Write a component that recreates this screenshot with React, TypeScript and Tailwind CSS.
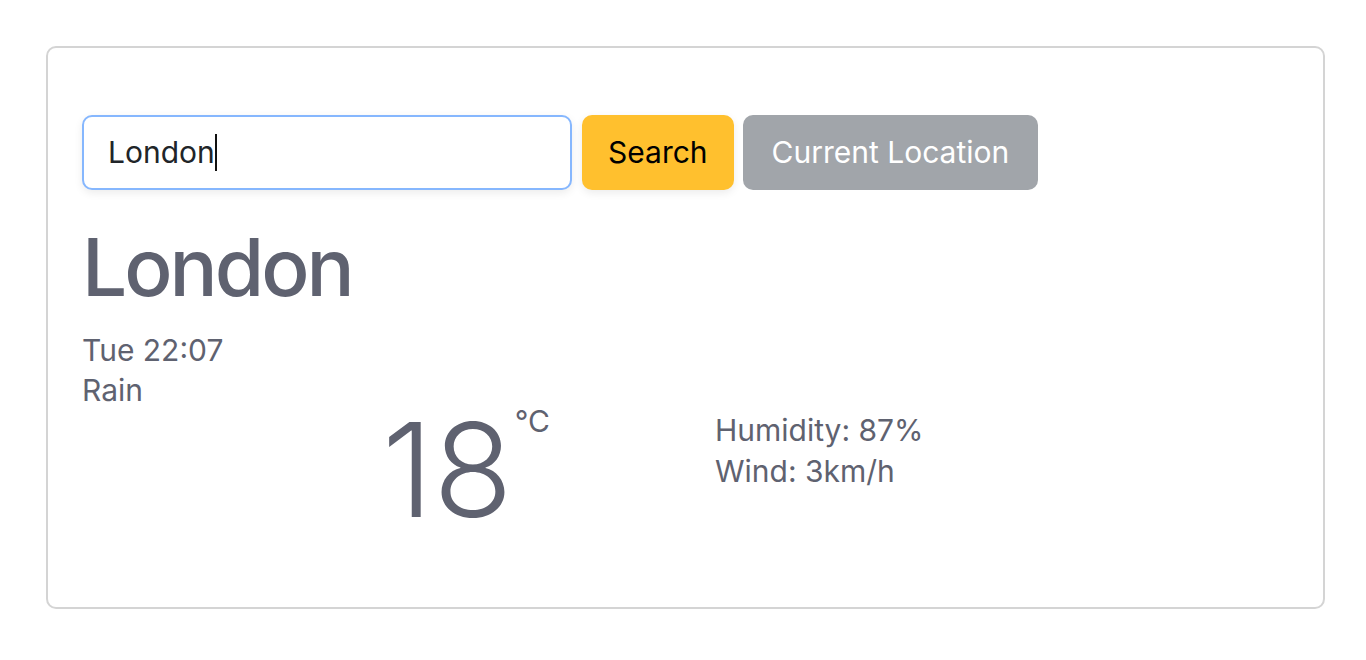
export default function App() {
  return (
    <div className="min-h-screen bg-white pt-[46px] pl-[46px] pr-[41px] font-['Inter','Liberation_Sans',sans-serif]">
      <div className="h-[563px] rounded-[10px] border-2 border-[#d4d4d4] pl-[34px] pt-[67px]">
        <SearchBar />
        <h1 className="mt-[37px] text-[80px] leading-[80px] font-medium tracking-[-3px] text-[#5f6270]">London</h1>
        <div className="mt-[23px] text-[30px] leading-[40px] text-[#5f6270]">
          <p>Tue 22:07</p>
          <p>Rain</p>
        </div>
        <div className="flex items-start">
          <div className="flex w-[633px] items-start pl-[300px]">
            <span className="text-[130px] leading-[120px] font-light text-[#5f6270]">18</span>
            <span className="-mt-[9px] ml-[2px] text-[30px] leading-[40px] text-[#5f6270]">°C</span>
          </div>
          <ul className="text-[30px] leading-[41px] text-[#5f6270]">
            <li>Humidity: 87%</li>
            <li>Wind: 3km/h</li>
          </ul>
        </div>
      </div>
    </div>
  )
}

function SearchBar() {
  return (
    <div className="flex items-start">
      <div className="flex h-[75px] w-[490px] items-center rounded-[10px] border-2 border-[#86b7fe] bg-white pl-[24px] text-[30px] text-[#212529] shadow-[0_3px_8px_rgba(0,0,0,0.08)]">
        <span>London</span>
        <span className="h-[37px] w-[2px] bg-[#111]" />
      </div>
      <button className="ml-[10px] h-[75px] rounded-[10px] bg-[#ffc02e] px-[26px] text-[30px] text-black shadow-[0_3px_8px_rgba(0,0,0,0.08)]">
        Search
      </button>
      <button className="ml-[9px] h-[75px] rounded-[10px] bg-[#a1a5aa] px-[29px] text-[30px] text-white">
        Current Location
      </button>
    </div>
  )
}
